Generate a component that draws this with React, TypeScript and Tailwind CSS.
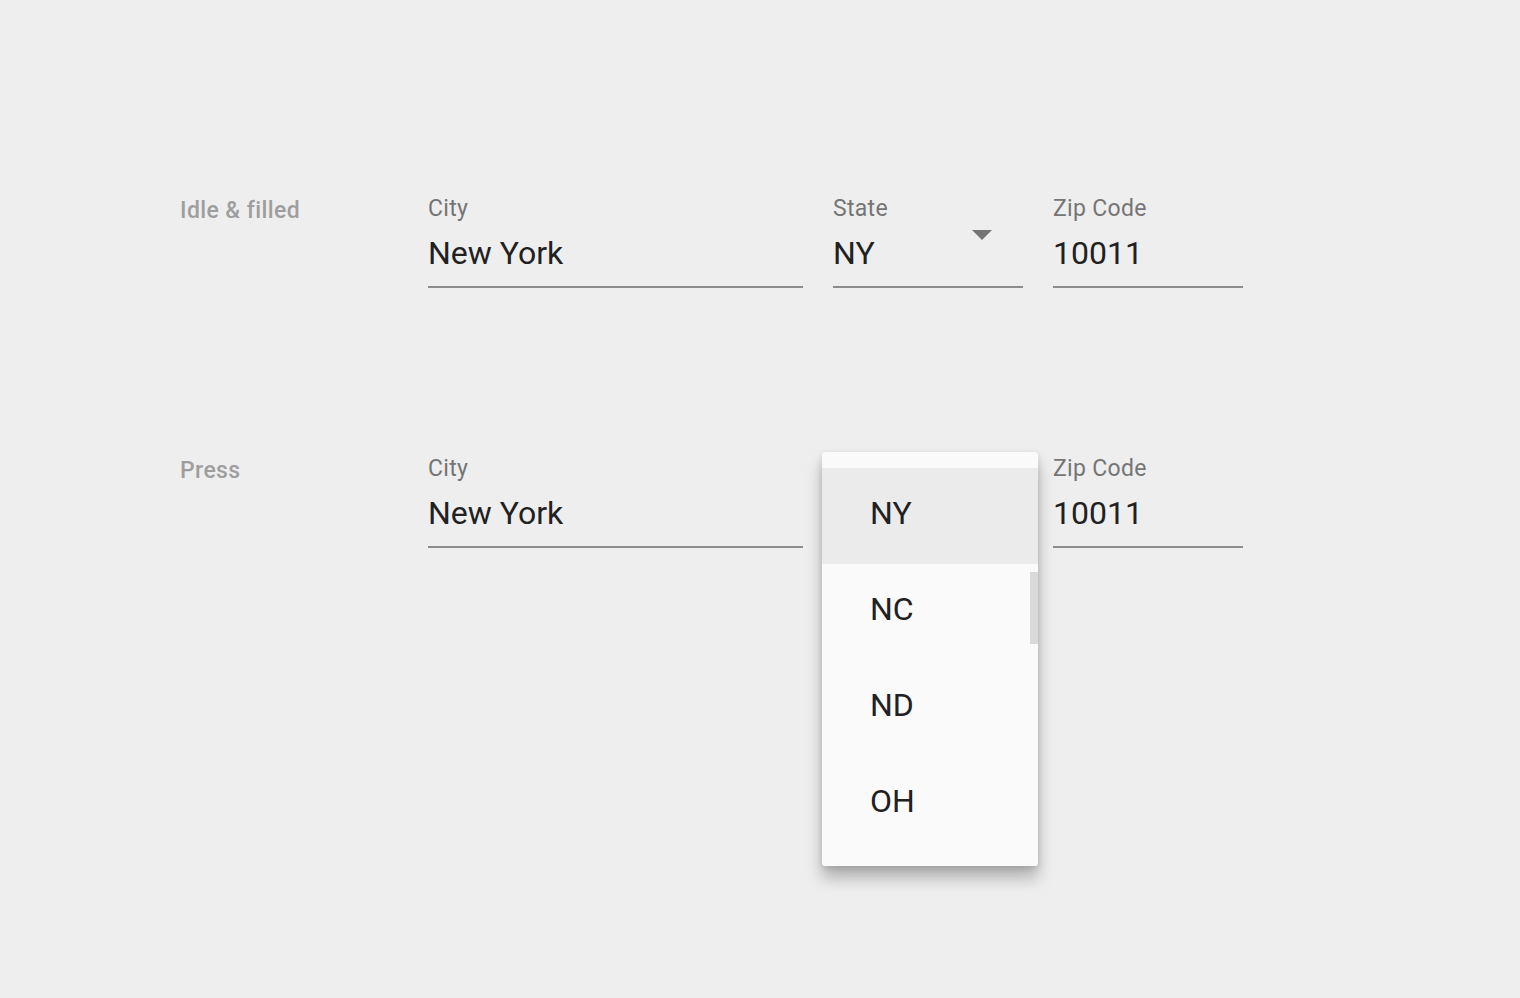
import React from "react";

const font = { fontFamily: "Roboto, 'Noto Sans', sans-serif" };

function Field({ label, value, width, arrow }: { label: string; value: string; width: string; arrow?: boolean }) {
  return (
    <div className={`flex flex-col ${width}`}>
      <div className="text-[23px] leading-[24px] tracking-[0.3px] text-[#757575]">{label}</div>
      <div className="mt-[12px] flex items-start justify-between">
        <div className="text-[32px] leading-[40px] text-[#212121]">{value}</div>
        {arrow && (
          <svg width="20" height="10" viewBox="0 0 20 10" className="mt-[-3px] mr-[31px]">
            <path d="M0 0 L20 0 L10 10 Z" fill="#757575" />
          </svg>
        )}
      </div>
      <div className="mt-[13px] h-[2px] bg-[#8c8c8c]" />
    </div>
  );
}

function Dropdown() {
  const items = ["NY", "NC", "ND", "OH"];
  return (
    <div className="absolute left-[-11px] top-[-5px] z-10 h-[414px] w-[216px] overflow-hidden rounded-[3px] bg-[#fafafa] pt-[16px] shadow-[0_12px_16px_rgba(0,0,0,0.26),0_2px_6px_rgba(0,0,0,0.12)]">
      {items.map((it, i) => (
        <div
          key={it}
          className={`h-[96px] pl-[48px] pt-[25px] text-[32px] leading-[40px] text-[#212121] ${i === 0 ? "bg-[#ebebeb]" : ""}`}
        >
          {it}
        </div>
      ))}
      <div className="absolute right-0 top-[120px] h-[72px] w-[8px] bg-[#d9d9d9]" />
    </div>
  );
}

export default function App() {
  return (
    <div className="min-h-[998px] w-full bg-[#eeeeee] pl-[180px] pt-[197px]" style={font}>
      <div className="flex">
        <div className="mt-[2px] w-[248px] text-[23px] font-medium leading-[24px] tracking-[0.4px] text-[#9e9e9e]">Idle &amp; filled</div>
        <div className="flex gap-[30px]">
          <Field label="City" value="New York" width="w-[375px]" />
          <Field label="State" value="NY" width="w-[190px]" arrow />
          <Field label="Zip Code" value="10011" width="w-[190px]" />
        </div>
      </div>
      <div className="mt-[169px] flex">
        <div className="mt-[2px] w-[248px] text-[23px] font-medium leading-[24px] tracking-[0.4px] text-[#9e9e9e]">Press</div>
        <div className="flex gap-[30px]">
          <Field label="City" value="New York" width="w-[375px]" />
          <div className="relative w-[190px]">
            <Dropdown />
          </div>
          <Field label="Zip Code" value="10011" width="w-[190px]" />
        </div>
      </div>
    </div>
  );
}
